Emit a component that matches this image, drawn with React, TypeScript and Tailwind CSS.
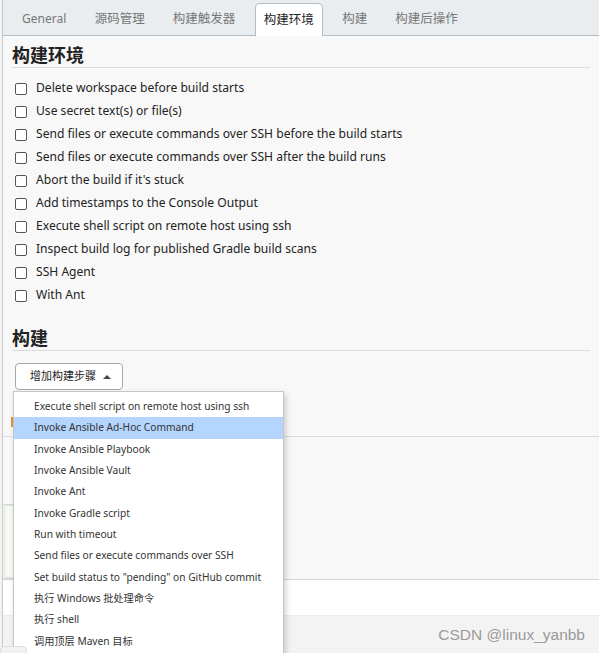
import React from "react";

const tabs = ["General", "源码管理", "构建触发器", "构建环境", "构建", "构建后操作"];

const envOptions = [
  "Delete workspace before build starts",
  "Use secret text(s) or file(s)",
  "Send files or execute commands over SSH before the build starts",
  "Send files or execute commands over SSH after the build runs",
  "Abort the build if it's stuck",
  "Add timestamps to the Console Output",
  "Execute shell script on remote host using ssh",
  "Inspect build log for published Gradle build scans",
  "SSH Agent",
  "With Ant",
];

const steps = [
  "Execute shell script on remote host using ssh",
  "Invoke Ansible Ad-Hoc Command",
  "Invoke Ansible Playbook",
  "Invoke Ansible Vault",
  "Invoke Ant",
  "Invoke Gradle script",
  "Run with timeout",
  "Send files or execute commands over SSH",
  'Set build status to "pending" on GitHub commit',
  "执行 Windows 批处理命令",
  "执行 shell",
  "调用顶层 Maven 目标",
];

const font = "font-['Noto_Sans','Noto_Sans_CJK_SC',sans-serif]";

export default function App() {
  return (
    <div className={`w-[599px] h-[653px] relative overflow-hidden bg-[#f3f3f3] pl-[2px] ${font}`}>
      <div className="h-full flex flex-col border-l border-[#c9c9c9] bg-[#f8f8f8]">
        {/* tabs */}
        <div className="h-[36px] shrink-0 bg-[#e9edf0] border-b border-[#b4bcc2] flex items-end gap-[11px] pl-[10px]">
          {tabs.map((t) =>
            t === "构建环境" ? (
              <div
                key={t}
                className="h-[33px] -mb-px px-[8px] flex items-center bg-white border border-b-0 border-[#b4bcc2] rounded-t-[5px] text-[12.5px] text-[#222]"
              >
                {t}
              </div>
            ) : (
              <div
                key={t}
                className={`h-[32px] flex items-center text-[#777] ${
                  t === "General" ? "px-[9px] text-[12px]" : "px-[8.5px] text-[12.5px]"
                }`}
              >
                {t}
              </div>
            )
          )}
        </div>

        <div className="px-[9px]">
          <h2 className="mt-[7px] h-[25px] leading-[24px] pb-px border-b border-[#dcdcdc] text-[18px] font-bold text-[#222]">
            构建环境
          </h2>
          <div className="mt-[9px]">
            {envOptions.map((o) => (
              <label key={o} className="h-[23px] flex items-center gap-[9px] text-[12.1px] text-[#222]">
                <span className="ml-[3px] w-[12px] h-[12px] border border-[#555] rounded-[2px] bg-white shrink-0" />
                {o}
              </label>
            ))}
          </div>

          <h2 className="mt-[19px] h-[25px] leading-[24px] pb-px border-b border-[#dcdcdc] text-[18px] font-bold text-[#222]">
            构建
          </h2>
          <button className="mt-[12px] ml-[3px] w-[108px] h-[27px] flex items-center justify-center gap-[7px] pl-[3px] bg-white border border-[#a8a8a8] rounded-[4px] text-[11px] text-[#222]">
            增加构建步骤
            <span className="w-0 h-0 border-x-[4px] border-x-transparent border-b-[4px] border-b-[#444]" />
          </button>
          <div className="h-[46px] pt-[27px]">
            <span className="block -ml-px w-[3px] h-[10px] bg-[#e8913b]" />
          </div>
        </div>

        <div className="border-t border-[#dcdcdc] h-[143px] pt-[67px]">
          <div className="w-[220px] h-[75px] border-y border-[#cfe0cf] bg-[#f4f7f2] pl-px">
            <div className="h-full border border-[#dfe6dc] rounded-[3px] bg-[#f7f9f6]" />
          </div>
        </div>
        <div className="border-t border-[#d6d6d6] bg-white h-[36px]" />
        <div className="flex-1 border-t border-[#ececec] bg-[#f3f3f3]" />
      </div>

      {/* dropdown menu */}
      <div className="absolute left-[13px] top-[391px] w-[271px] bg-white border border-[#c6c6c6] shadow-[2px_3px_6px_rgba(0,0,0,0.18)] pt-[4px] pb-[8px]">
        {steps.map((s, i) => (
          <div
            key={s}
            className={`h-[21.33px] leading-[21.33px] pl-[20px] text-[10.2px] text-[#333] ${
              i === 1 ? "bg-[#b4d5fe]" : ""
            }`}
          >
            {s}
          </div>
        ))}
      </div>

      <div className="absolute left-0 top-[646px] w-[27px] h-[12px] bg-[#f1f1f1] border border-[#dedede] rounded-t-[4px]" />

      <div className="absolute right-[14px] top-[623px] text-[15.5px] text-[#9a9a9a] font-['Liberation_Sans',sans-serif]">
        CSDN @linux_yanbb
      </div>
    </div>
  );
}
